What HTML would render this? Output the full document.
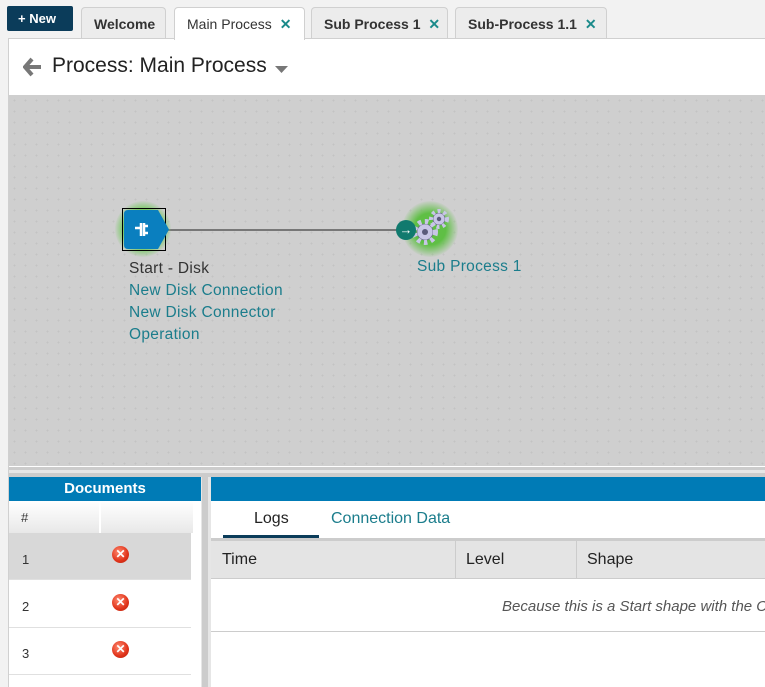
<!DOCTYPE html><html><head><style>
*{margin:0;padding:0;box-sizing:border-box}
body{width:765px;height:687px;overflow:hidden;background:#f2f2f2;font-family:"Liberation Sans",sans-serif;position:relative}
.a{position:absolute}
.tab{position:absolute;top:7px;height:32px;background:#ececec;border:1px solid #d0d0d0;border-bottom:none;border-radius:4px 4px 0 0;font-size:14px;font-weight:bold;color:#333;padding:8px 0 0 12px}
.x{color:#1a8a8a;font-weight:bold;margin-left:4px}
.row{position:absolute;left:9px;width:182px;height:47px;border-bottom:1px solid #e0e0e0;font-size:13px;color:#333}
.err{position:absolute;left:103px;top:13px;width:17px;height:17px;border-radius:50%;background:radial-gradient(circle at 40% 35%,#ff8a70,#e0331a 60%,#b0200d);color:#fff;font-size:12px;font-weight:bold;text-align:center;line-height:17px}
</style></head><body>
<div class="a" style="left:7px;top:6px;width:66px;height:25px;background:#0b3c5a;border-radius:2px;color:#fff;font-size:13px;font-weight:bold;padding:5px 0 0 11px">+ New</div>
<div class="tab" style="left:81px;width:85px">Welcome</div>
<div class="tab" style="left:174px;width:131px;background:#fff;font-weight:normal;height:33px;z-index:2">Main Process <span class="x">✕</span></div>
<div class="tab" style="left:311px;width:137px">Sub Process 1 <span class="x">✕</span></div>
<div class="tab" style="left:455px;width:152px">Sub-Process 1.1 <span class="x">✕</span></div>
<div class="a" style="left:8px;top:38px;width:757px;height:649px;background:#fff;border-top:1px solid #d0d0d0;border-left:1px solid #d0d0d0"></div>
<svg class="a" style="left:23px;top:57px" width="20" height="20"><path d="M9 2 L2 10 L9 18 M2 10 H18" stroke="#777" stroke-width="4" fill="none"/></svg>
<div class="a" style="left:52px;top:54px;font-size:21px;color:#222">Process: Main Process</div>
<svg class="a" style="left:275px;top:66px" width="14" height="8"><path d="M0 0H13L6.5 7Z" fill="#777"/></svg>
<div class="a" style="left:9px;top:95px;width:756px;height:371px;background-color:#cfcfcf;background-image:radial-gradient(#c3c3c3 0.8px,transparent 1px);background-size:11px 11px"></div>
<div class="a" style="left:165px;top:229px;width:235px;height:2px;background:#777"></div>
<div class="a" style="left:115px;top:201px;width:56px;height:56px;border-radius:50%;background:radial-gradient(#7dc96a 50%,rgba(120,200,100,0) 72%)"></div>
<div class="a" style="left:122px;top:208px;width:44px;height:43px;border:1px solid #000"></div>
<svg class="a" style="left:124px;top:210px" width="48" height="40"><path d="M4 0H34L45 19.5L34 39H4Q0 39 0 35V4Q0 0 4 0Z" fill="#0a7fbf"/><path d="M11 18h6M17 13v13M20 13v13M20 16h4M20 23h4" stroke="#fff" stroke-width="2.5" fill="none"/></svg>
<div class="a" style="left:402px;top:201px;width:56px;height:56px;border-radius:50%;background:radial-gradient(#5fbf45 40%,rgba(120,200,100,0) 72%)"></div>
<svg class="a" style="left:408px;top:208px" width="46" height="40">
<g fill="#c8c6e6" stroke="#6a6a8a" stroke-width="0.8">
<circle cx="31" cy="11" r="6"/><circle cx="31" cy="11" r="8" fill="none" stroke="#c8c6e6" stroke-width="4" stroke-dasharray="3 3"/>
<circle cx="17" cy="24" r="8"/><circle cx="17" cy="24" r="10.5" fill="none" stroke="#c8c6e6" stroke-width="5" stroke-dasharray="3.5 3.5"/>
</g><circle cx="17" cy="24" r="3" fill="#5a5a7a"/><circle cx="31" cy="11" r="2.2" fill="#5a5a7a"/></svg>
<div class="a" style="left:396px;top:220px;width:20px;height:20px;border-radius:50%;background:#117a6e;color:#fff;font-size:13px;text-align:center;line-height:19px;font-weight:bold">→</div>
<div class="a" style="left:129px;top:258px;font-size:15.5px;letter-spacing:0.3px;line-height:22px;color:#333">Start - Disk<br><span style="color:#1b7d8c">New Disk Connection<br>New Disk Connector<br>Operation</span></div>
<div class="a" style="left:417px;top:258px;font-size:15.5px;letter-spacing:0.3px;color:#1b7d8c">Sub Process 1</div>
<div class="a" style="left:9px;top:466px;width:756px;height:11px;background:#ccc;border-top:1px solid #fff"></div>
<div class="a" style="left:9px;top:470px;width:756px;height:3px;background:#e6e6e6"></div>
<div class="a" style="left:9px;top:477px;width:192px;height:24px;background:#007bb6;color:#fff;font-weight:bold;font-size:15px;text-align:center;line-height:24px">Documents</div>
<div class="a" style="left:9px;top:501px;width:184px;height:32px;background:linear-gradient(#fff,#e8e8e8);font-size:13px;color:#333;padding:9px 0 0 12px">#</div>
<div class="a" style="left:99px;top:501px;width:2px;height:32px;background:#fff"></div>
<div class="row" style="top:533px;background:#d8d8d8"><span class="a" style="left:13px;top:19px">1</span><div class="err">✕</div></div>
<div class="row" style="top:581px"><span class="a" style="left:13px;top:18px">2</span><div class="err">✕</div></div>
<div class="row" style="top:628px"><span class="a" style="left:13px;top:18px">3</span><div class="err">✕</div></div>
<div class="a" style="left:201px;top:477px;width:10px;height:210px;background:#ccc;border-left:1px solid #e6e6e6;border-right:3px solid #e6e6e6"></div>
<div class="a" style="left:211px;top:477px;width:554px;height:24px;background:#007bb6"></div>
<div class="a" style="left:254px;top:510px;font-size:16px;color:#222">Logs</div>
<div class="a" style="left:223px;top:535px;width:96px;height:3px;background:#0b3c5a"></div>
<div class="a" style="left:331px;top:510px;font-size:16px;color:#1b7d8c">Connection Data</div>
<div class="a" style="left:211px;top:538px;width:554px;height:41px;background:#e4e4e4;border-top:3px solid #ccc;border-bottom:1px solid #ccc;font-size:16px;color:#222"><span class="a" style="left:11px;top:10px">Time</span><span class="a" style="left:244px;top:0;height:37px;border-left:1px solid #ccc"></span><span class="a" style="left:255px;top:10px">Level</span><span class="a" style="left:365px;top:0;height:37px;border-left:1px solid #ccc"></span><span class="a" style="left:376px;top:10px">Shape</span></div>
<div class="a" style="left:502px;top:598px;font-size:15px;font-style:italic;color:#555;white-space:nowrap">Because this is a Start shape with the C</div>
<div class="a" style="left:211px;top:631px;width:554px;height:1px;background:#ccc"></div>
</body></html>
